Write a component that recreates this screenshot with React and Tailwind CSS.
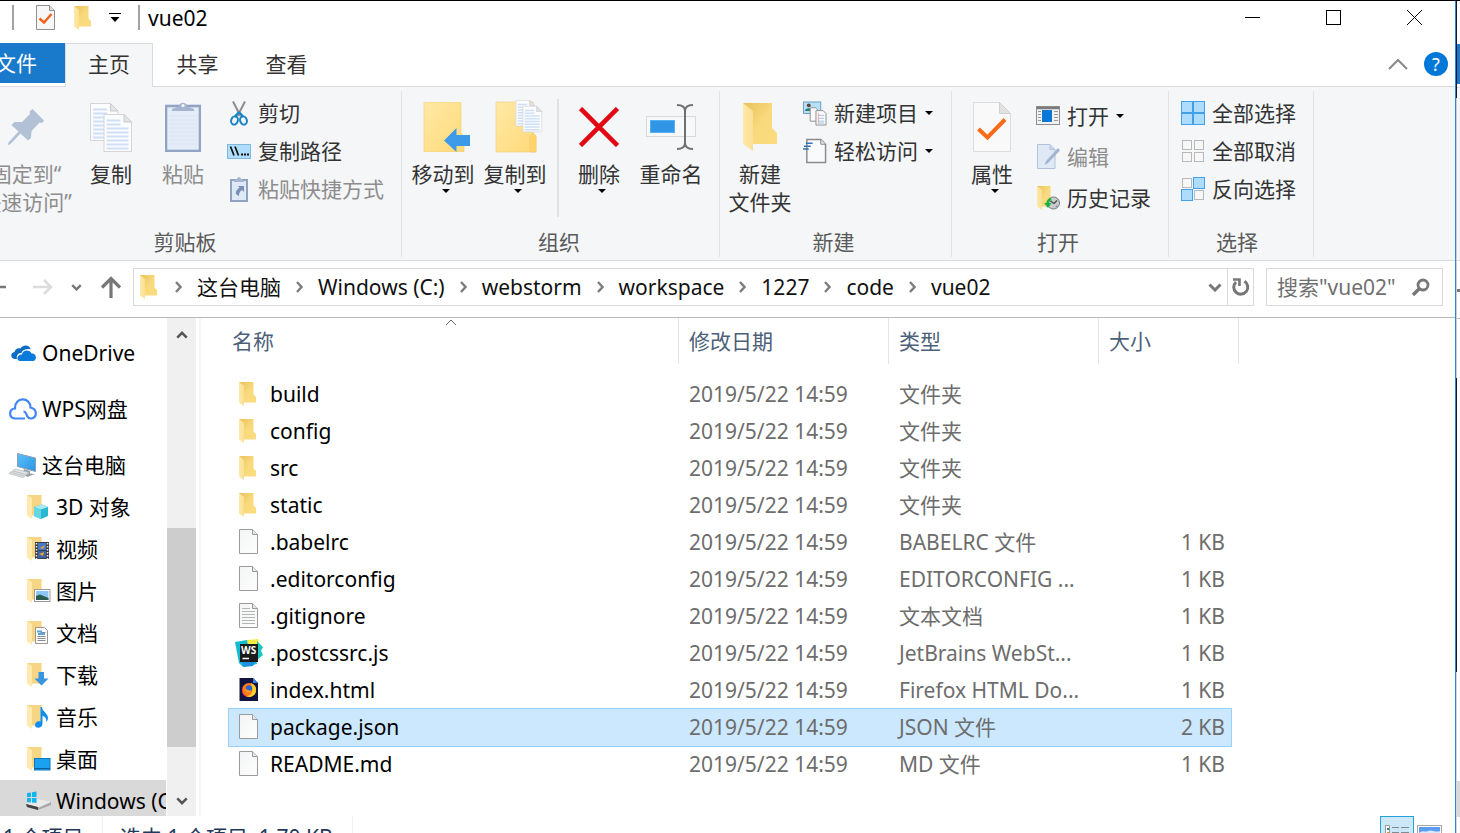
import { useState } from "react";

/* ---------- icons ---------- */

// gradients shared by all the icons
function IconDefs() {
  return (
    <svg width="0" height="0" className="absolute" aria-hidden="true">
      <defs>
        <linearGradient id="folderBack" x1="0" y1="0" x2="1" y2="1">
          <stop offset="0" stopColor="#e9c15a" />
          <stop offset="0.5" stopColor="#f8d97c" />
          <stop offset="1" stopColor="#fbdc80" />
        </linearGradient>
        <linearGradient id="folderFlap" x1="0" y1="0" x2="1" y2="0">
          <stop offset="0" stopColor="#ffe9a9" />
          <stop offset="1" stopColor="#fbdf92" />
        </linearGradient>
        <linearGradient id="folderFlat" x1="0" y1="0" x2="1" y2="1">
          <stop offset="0" stopColor="#ffe9a6" />
          <stop offset="1" stopColor="#ffd978" />
        </linearGradient>
        <linearGradient id="paper" x1="0" y1="0" x2="1" y2="1">
          <stop offset="0" stopColor="#f4f5f6" />
          <stop offset="1" stopColor="#fdfdfd" />
        </linearGradient>
        <linearGradient id="screen" x1="0" y1="0" x2="1" y2="1">
          <stop offset="0" stopColor="#5cc0fb" />
          <stop offset="1" stopColor="#2a93e4" />
        </linearGradient>
      </defs>
    </svg>
  );
}

function FolderShape() {
  return (
    <>
      <path d="M0 0H14.500V12.500L17 15V20.500H4Z" fill="url(#folderBack)" />
      <path d="M0 0L5 4V24L0 20.500Z" fill="url(#folderFlap)" />
    </>
  );
}

function FolderIcon({ className = "w-[17px] h-6" }) {
  return (
    <svg viewBox="0 0 17 24" preserveAspectRatio="xMinYMid meet" className={className}>
      <FolderShape />
    </svg>
  );
}

function FileIcon({ lines = false }) {
  return (
    <svg viewBox="0 0 20 25" className="w-5 h-[25px]">
      <path d="M0.500 0.500H13.500L18.500 5.500V24.500H0.500Z" fill="url(#paper)" stroke="#9b9b9b" />
      <path d="M13.500 0.500V5.500H18.500" fill="#e6e6e6" stroke="#9b9b9b" />
      {lines && (
        <path d="M3 5.500H11M3 8.500H16M3 11.500H16M3 14.500H16M3 17.500H16M3 20.500H16" stroke="#b4b4b4" />
      )}
    </svg>
  );
}

function WebStormIcon() {
  return (
    <svg viewBox="0 0 28 28" className="w-7 h-7">
      <path d="M0 3L12 1L18 6L22 25L8 28L4 24Z" fill="#12bccf" />
      <path d="M12 1L23 0L25 8L14 12Z" fill="#f5ec3f" />
      <path d="M22 2L28 8L26 12L28 16L22 21Z" fill="#1bc8c0" />
      <path d="M5 20L20 22L18 27L9 28Z" fill="#1f8fe0" />
      <rect x="5" y="5" width="18" height="18" fill="#1a1a1a" />
      <text x="6" y="15" fontSize="10" fontWeight="700" fill="#fff" fontFamily="Open Sans, sans-serif">
        WS
      </text>
      <path d="M7.500 19.500H14" stroke="#fff" strokeWidth="1.500" />
    </svg>
  );
}

function FirefoxFileIcon() {
  return (
    <svg viewBox="0 0 20 25" className="w-5 h-[25px]">
      <path d="M0.500 1H14L19 6V24H0.500Z" fill="#0f1440" />
      <path d="M14 1V6H19Z" fill="#3b7de0" />
      <circle cx="10" cy="13" r="7" fill="#ff7a1a" />
      <path d="M12 6C17 8 18 12 16.500 16C15 19.500 10 21 7 19C12 19 14 15 13 11Z" fill="#ffcb2e" />
      <path d="M3.500 9C3 15 5 18.500 9 19.500C5 20.500 1.500 15 3.500 9Z" fill="#f0304f" />
      <circle cx="10" cy="11.500" r="3.200" fill="#2c64c8" />
      <path d="M6 12C8 12 9 14 12.500 13.500C11 16.500 7 16.500 6 12Z" fill="#ff9a1f" />
    </svg>
  );
}

function PropertiesSmallIcon() {
  return (
    <svg viewBox="0 0 20 25" className="w-5 h-[25px]">
      <path d="M0.500 0.500H13.500L18.500 5.500V24.500H0.500Z" fill="#f7f7f7" stroke="#8f8f8f" />
      <path d="M13.500 0.500V5.500H18.500" fill="#dedede" stroke="#8f8f8f" />
      <path d="M3.500 13.500L8 17.500L15.500 9" fill="none" stroke="#f2601c" strokeWidth="2.400" />
    </svg>
  );
}

function PinIcon() {
  return (
    <svg viewBox="0 0 36 36" className="w-9 h-9">
      <path
        d="M24.500 0L36 11.500L34 14L31.500 13.500L23.500 22L23 29L20 31.500L12.500 24.500L2 35.500L0 36L0.500 33.500L10.500 22.500L3.500 16L6.500 13L14 13L22 5L21.500 2.500Z"
        fill="#b3c1d6"
      />
    </svg>
  );
}

function PageShape({ fill = "#fbfcfe" }) {
  return (
    <>
      <path d="M0.500 0.500H20.500L28 8V37.500H0.500Z" fill={fill} stroke="#d3d5d8" />
      <path d="M20.500 0.500V8H28Z" fill="#e4e4e4" stroke="#cbcbcb" />
      <path
        d="M3 6.500H17M3 10.500H17M3 14.500H25M3 18.500H25M3 22.500H25M3 26.500H25M3 30.500H25M3 34.500H25"
        stroke="#cfe0f6"
        strokeWidth="2"
      />
    </>
  );
}

function CopyIcon() {
  return (
    <svg viewBox="0 0 42 49" className="w-[42px] h-[49px]">
      <PageShape />
      <g transform="translate(13.500 11)">
        <PageShape />
      </g>
    </svg>
  );
}

function PasteIcon() {
  return (
    <svg viewBox="0 0 36 50" className="w-9 h-[50px]">
      <rect x="1" y="4" width="34" height="45" fill="#e4ecf8" stroke="#92a4c4" strokeWidth="2.600" />
      <path d="M4 14H32M4 18H32M4 22H32M4 26H32M4 30H32M4 34H32M4 38H32M4 42H32" stroke="#dae4f3" />
      <path d="M7 9V7L14 4.500C14 -0.500 22 -0.500 22 4.500L29 7V9Z" fill="#a5b4cf" />
      <circle cx="18" cy="3.600" r="1.600" fill="#f4f6f8" />
    </svg>
  );
}

function CutIcon() {
  return (
    <svg viewBox="0 0 18 25" className="w-[18px] h-[25px]">
      <path d="M3 0.500L10.500 15M15 0.500L7.500 15" stroke="#8d8d8d" strokeWidth="2" />
      <path d="M9 11L13.500 16M9 11L4.500 16" stroke="#1c84c9" strokeWidth="2.200" />
      <ellipse cx="4.500" cy="19.500" rx="3.300" ry="4.200" fill="none" stroke="#1c84c9" strokeWidth="2" transform="rotate(20 4.500 19.500)" />
      <ellipse cx="13.500" cy="19.500" rx="3.300" ry="4.200" fill="none" stroke="#1c84c9" strokeWidth="2" transform="rotate(-20 13.500 19.500)" />
    </svg>
  );
}

function CopyPathIcon() {
  return (
    <svg viewBox="0 0 24 15" className="w-6 h-[15px]">
      <rect x="0.500" y="0.500" width="23" height="14" fill="#b0ddfc" stroke="#7fb9df" />
      <path d="M3.500 2.500L7 11.500M8 2.500L11.500 11.500" stroke="#111" strokeWidth="1.700" />
      <path d="M14 10.500H16M17 10.500H19M20 10.500H22" stroke="#111" strokeWidth="1.800" />
    </svg>
  );
}

function PasteShortcutIcon() {
  return (
    <svg viewBox="0 0 18 25" className="w-[18px] h-[25px]">
      <rect x="1" y="3" width="16" height="21" fill="#dfe8f5" stroke="#8fa2c2" strokeWidth="2" />
      <path d="M4 5V3L7 2C7 -0.500 11 -0.500 11 2L14 3V5Z" fill="#a5b4cf" />
      <path d="M8 9H14V15L12 13C9.500 14.500 9 16.500 9 19C4.500 17.500 5 13.500 9.500 10.800Z" fill="#7a90b8" />
    </svg>
  );
}

function MoveToIcon() {
  return (
    <svg viewBox="-9 0 56 50" className="w-14 h-[50px]">
      <path d="M0 0H37V31L40 34V50H0Z" fill="url(#folderFlat)" stroke="#f3cf77" strokeWidth="0.600" />
      <path d="M20 38.500L32.500 26V33H46V44H32.500V50Z" fill="#3c9ae8" />
    </svg>
  );
}

function CopyToIcon() {
  return (
    <svg viewBox="-9 0 56 54" className="w-14 h-[54px]">
      <path d="M0 2H37V33L40 36V52H0Z" fill="url(#folderFlat)" stroke="#f3cf77" strokeWidth="0.600" />
      <path d="M34 52V36L37 33L40 36V52Z" fill="#ffd56c" stroke="#efc766" strokeWidth="0.600" />
      <g transform="translate(19.500 0) scale(0.690)">
        <PageShape />
      </g>
      <g transform="translate(26.500 6) scale(0.690)">
        <PageShape />
      </g>
    </svg>
  );
}

function DeleteIcon() {
  return (
    <svg viewBox="0 0 40 40" className="w-10 h-10">
      <path d="M1.500 1.500L38.500 38.500M38.500 1.500L1.500 38.500" stroke="#e30613" strokeWidth="4.600" />
    </svg>
  );
}

function RenameIcon() {
  return (
    <svg viewBox="0 0 50 46" className="w-[50px] h-[46px]">
      <rect x="0.500" y="12.500" width="49" height="20" fill="#f7f8fa" stroke="#d8d9db" />
      <rect x="4.500" y="16.500" width="24" height="12" fill="#3195e6" stroke="#55b0f2" />
      <path d="M31 1C36 1 39 3 39 7V39C39 43 36 45 31 45M47 1C42 1 39 3 39 7M39 39C39 43 42 45 47 45" fill="none" stroke="#6f6f6f" strokeWidth="2" />
    </svg>
  );
}

function NewItemIcon() {
  return (
    <svg viewBox="0 0 25 25" className="w-[25px] h-[25px]">
      <rect x="0.500" y="0.500" width="18" height="12" fill="#b7e0f8" stroke="#6c9dbb" />
      <circle cx="6" cy="4" r="2" fill="#5d4636" />
      <path d="M2 10C2 6 10 6 10 10Z" fill="#2d7d72" />
      <path d="M7.500 6.500H13L15.500 9V20.500H7.500Z" fill="#fafafa" stroke="#8f8f8f" />
      <path d="M13.500 9.500H21L24 12.500V24.500H13.500Z" fill="#fafafa" stroke="#8f8f8f" />
      <path d="M16 14.500H22M16 17.500H22M16 20.500H22M16 22.500H22" stroke="#9dc3e6" />
      <path d="M16 12V23" stroke="#f0a3a3" />
    </svg>
  );
}

function EasyAccessIcon() {
  return (
    <svg viewBox="0 0 25 26" className="w-[25px] h-[26px]">
      <path d="M4 1H18.500L23.500 6V25H4Z" fill="#fafafa" stroke="#8a8a8a" strokeWidth="1.500" />
      <path d="M18.500 1V6H23.500" fill="#e2e2e2" stroke="#8a8a8a" />
      <path d="M3 5H10M1 8H8M0 11H6" stroke="#2f74b5" strokeWidth="1.600" />
    </svg>
  );
}

function PropertiesIcon() {
  return (
    <svg viewBox="0 0 38 50" className="w-[38px] h-[50px]">
      <path d="M0.500 0.500H26.500L37.500 11.500V49.500H0.500Z" fill="#f9f9f9" stroke="#dcdcdc" />
      <path d="M26.500 0.500V11.500H37.500Z" fill="#e2e2e2" stroke="#d2d2d2" />
      <path d="M5.500 27L14.500 35.500L32 17.500" fill="none" stroke="#fb6a17" strokeWidth="4" />
    </svg>
  );
}

function OpenIcon() {
  return (
    <svg viewBox="0 0 24 19" className="w-6 h-[19px]">
      <rect x="0.500" y="0.500" width="23" height="18" fill="#f1f1f1" stroke="#8e8e8e" />
      <path d="M1 2H23" stroke="#7c7c7c" strokeWidth="2.500" />
      <rect x="6" y="4" width="10" height="12" fill="#0c78d6" />
      <path d="M2 5.500H5M2 8.500H5M2 11.500H5M2 14.500H5M18 5.500H22M18 8.500H22M18 11.500H22M18 14.500H22" stroke="#9a9a9a" />
    </svg>
  );
}

function EditIcon() {
  return (
    <svg viewBox="0 0 24 25" className="w-6 h-[25px]">
      <path d="M1.500 0.500H14L19 5.500V24.500H1.500Z" fill="#dfe8f5" stroke="#b3c2da" />
      <path d="M14 0.500V5.500H19" fill="#c8d5e8" stroke="#b3c2da" />
      <path d="M22 4L24 6.500L12 19L8.500 21L10 17Z" fill="#a3b5d2" />
    </svg>
  );
}

function HistoryIcon() {
  return (
    <svg viewBox="0 0 24 24" className="w-6 h-6">
      <path d="M1 0H14.500V20.500H5Z" fill="url(#folderBack)" />
      <path d="M1 0L6 4V24L1 20.500Z" fill="url(#folderFlap)" />
      <circle cx="17.500" cy="17" r="6" fill="#c9cdcf" stroke="#73797c" />
      <path d="M14.500 15L18 17.500L21 14.500M20.500 20.500L20 20" stroke="#3f4345" strokeWidth="1.200" fill="none" />
      <path d="M15 12C11 12.500 10.500 15.500 10.500 17H8L12 22L15.500 17H13C13 16 13.500 14.500 15.500 14.500Z" fill="#19b33c" />
    </svg>
  );
}

function GridIcon({ filled }) {
  const cells = [[0, 0], [1, 0], [0, 1], [1, 1]];
  return (
    <svg viewBox="0 0 24 24" className="w-6 h-6">
      {cells.map(([cx, cy], i) =>
        filled.includes(i) ? (
          <rect key={i} x={cx * 12 + 0.5} y={cy * 12 + 0.5} width="11" height="11" fill="#aedcfd" stroke="#42a0e8" />
        ) : (
          <rect key={i} x={cx * 12 + 1.5} y={cy * 12 + 1.5} width="9" height="9" fill="#f7f7f7" stroke="#b9b9b9" />
        )
      )}
    </svg>
  );
}

function Chevron() {
  return (
    <svg viewBox="0 0 7 12" className="w-[7px] h-3 shrink-0">
      <path d="M1 1L5.500 6L1 11" fill="none" stroke="#7d7d7d" strokeWidth="2.400" />
    </svg>
  );
}

function ChevronDown({ className, color = "#777" }) {
  return (
    <svg viewBox="0 0 14 9" className={className}>
      <path d="M1.500 1.500L7 7L12.500 1.500" fill="none" stroke={color} strokeWidth="3" />
    </svg>
  );
}

function Caret({ className = "" }) {
  return (
    <svg viewBox="0 0 8 4" className={`w-2 h-1 shrink-0 ${className}`}>
      <path d="M0 0H8L4 4Z" fill="#000" />
    </svg>
  );
}

function OneDriveIcon() {
  return (
    <svg viewBox="0 0 25 16" className="w-[25px] h-4">
      <path d="M6 14H3.500C-1 13 -0.500 7.500 3.500 7C4 3.500 7.500 2.500 9.500 3.500C12 -1 19 -0.500 19.500 4.500C14 3 11 6 10.500 8C7 7.500 5 11 6 14Z" fill="#0a6cc4" />
      <path d="M9 16C5 15.500 5.500 9.500 11 9.500C11.500 5 18.500 4 20.500 8.500C25.500 8 26.500 15 22.500 16Z" fill="#0a7bdc" />
    </svg>
  );
}

function WpsCloudIcon() {
  return (
    <svg viewBox="0 0 28 22" className="w-7 h-[22px]">
      <path
        d="M16 20.500H6C-0.500 20 -0.500 11 6 10.500C5.500 -1.500 21.500 -1.500 21.500 9.500C28.500 11 28.500 19.500 22 20.500C16 20.500 19 13.500 14.500 13.500"
        fill="none"
        stroke="#4285f4"
        strokeWidth="2.200"
      />
    </svg>
  );
}

function ComputerIcon() {
  return (
    <svg viewBox="0 0 28 25" className="w-7 h-[25px]">
      <path d="M8.500 0.500L26.500 5V18.500L8.500 13.500Z" fill="url(#screen)" stroke="#8ba0ae" />
      <path d="M15 16L21 18V20.500L26 21L18 24L14 19Z" fill="#9aa1a5" />
      <path d="M6 16L20 19.500L14 24.500L0 20.500Z" fill="#e3e6e8" stroke="#b6bcc0" strokeWidth="0.800" />
      <path d="M4 18L17 21.500M2.500 19.500L15.500 23" stroke="#a9afb3" strokeWidth="0.700" />
    </svg>
  );
}

function DriveIcon() {
  return (
    <svg viewBox="0 0 26 20" className="w-[26px] h-5">
      <path d="M0 13L12 8L25 11L13 18Z" fill="#e9e9e9" />
      <path d="M0 13L13 16.500L25 11V14L12 19L1 16Z" fill="#a8a8a8" />
      <path d="M0 13L12 16V19L1 16Z" fill="#444" />
      <path d="M1 2L5 1.400V6H1ZM6 1.200L10.500 0.500V6H6ZM1 7H5V11.500L1 11ZM6 7H10.500V12L6 11.500Z" fill="#12b5ee" />
    </svg>
  );
}

// folder with a small picture in its lower right corner
function BadgeFolder({ children }) {
  return (
    <svg viewBox="0 0 24 24" className="w-6 h-6">
      <path d="M0 0H14.500V20.500H4Z" fill="#f6d684" />
      <path d="M0 0L5 3V24L0 20.500Z" fill="#ffe9ad" />
      {children}
    </svg>
  );
}

const badges = {
  objects: (
    <>
      <path d="M7 12L15 9.500L21 12V21L14 24L7 21Z" fill="#28b8cf" />
      <path d="M7 12L15 9.500L21 12L14 14.500Z" fill="#a9eaf2" />
      <path d="M7 12L14 14.500V24L7 21Z" fill="#62d6e5" />
    </>
  ),
  video: (
    <>
      <rect x="8" y="5" width="14" height="17" fill="#3a3f47" />
      <rect x="11" y="6" width="8" height="7" fill="#4677c8" />
      <rect x="11" y="14" width="8" height="7" fill="#3f63a8" />
      <path d="M9.500 6V22M20.500 6V22" stroke="#e6e6e6" strokeWidth="1.500" strokeDasharray="1.500 1.500" />
      <path d="M13 11L18 8L16 12ZM12 17L17 15L16 19Z" fill="#f0a62c" />
    </>
  ),
  pictures: (
    <>
      <rect x="7.500" y="10.500" width="15.500" height="12" fill="#fff" stroke="#9a9a9a" />
      <rect x="9" y="12" width="12.500" height="9" fill="#8cc6f2" />
      <path d="M9 17L13 15.500L21.500 19V21H9Z" fill="#2d5c4e" />
    </>
  ),
  documents: (
    <>
      <path d="M8.500 6.500H17.500L20.500 9.500V22.500H8.500Z" fill="#fbfbfb" stroke="#969696" />
      <path d="M10.500 15.500H18.500M10.500 17.500H18.500M10.500 19.500H18.500M13.500 11.500H18.500" stroke="#8d8d8d" />
      <path d="M10 10.500H15M11 13H18" stroke="#5aa6d8" strokeWidth="2" />
    </>
  ),
  downloads: <path d="M11.500 9H17V15.500H21.500L14.500 22.500L7.500 15.500H11.500Z" fill="#3a94e0" />,
  music: (
    <path d="M13.500 2H15C15.500 7 21 8 21 13C21 15 20 16 19 17C20 13 17.500 11.500 15.500 11V18.500C15.500 24 7.500 24 8 19.500C8.500 16.500 11.500 15.500 13.500 16.500Z" fill="#1090ee" />
  ),
  desktop: (
    <>
      <rect x="7.500" y="11.500" width="15.500" height="11.500" fill="#1ba1f2" stroke="#0f76bb" />
      <path d="M8 21.500H23" stroke="#0d5f9a" />
    </>
  ),
};

/* ---------- data ---------- */

const crumbs = ["这台电脑", "Windows (C:)", "webstorm", "workspace", "1227", "code", "vue02"];

const treeItems = [
  { label: "OneDrive", icon: <OneDriveIcon />, root: true, spaced: true },
  { label: "WPS网盘", icon: <WpsCloudIcon />, root: true, spaced: true },
  { label: "这台电脑", icon: <ComputerIcon />, root: true },
  { label: "3D 对象", icon: <BadgeFolder>{badges.objects}</BadgeFolder> },
  { label: "视频", icon: <BadgeFolder>{badges.video}</BadgeFolder> },
  { label: "图片", icon: <BadgeFolder>{badges.pictures}</BadgeFolder> },
  { label: "文档", icon: <BadgeFolder>{badges.documents}</BadgeFolder> },
  { label: "下载", icon: <BadgeFolder>{badges.downloads}</BadgeFolder> },
  { label: "音乐", icon: <BadgeFolder>{badges.music}</BadgeFolder> },
  { label: "桌面", icon: <BadgeFolder>{badges.desktop}</BadgeFolder> },
  { label: "Windows (C:)", icon: <DriveIcon />, active: true },
];

const DATE = "2019/5/22 14:59";

const folder = <FolderIcon className="w-5 h-6" />;

const files = [
  { name: "build", icon: folder, type: "文件夹" },
  { name: "config", icon: folder, type: "文件夹" },
  { name: "src", icon: folder, type: "文件夹" },
  { name: "static", icon: folder, type: "文件夹" },
  { name: ".babelrc", icon: <FileIcon />, type: "BABELRC 文件", size: "1 KB" },
  { name: ".editorconfig", icon: <FileIcon />, type: "EDITORCONFIG ...", size: "1 KB" },
  { name: ".gitignore", icon: <FileIcon lines />, type: "文本文档", size: "1 KB" },
  { name: ".postcssrc.js", icon: <WebStormIcon />, type: "JetBrains WebSt...", size: "1 KB" },
  { name: "index.html", icon: <FirefoxFileIcon />, type: "Firefox HTML Do...", size: "1 KB" },
  { name: "package.json", icon: <FileIcon />, type: "JSON 文件", size: "2 KB" },
  { name: "README.md", icon: <FileIcon />, type: "MD 文件", size: "1 KB" },
];

/* ---------- ribbon ---------- */

function RibbonGroup({ title, className, children }) {
  return (
    <section className={`flex flex-col shrink-0 border-r border-[#e1e3e5] ${className}`}>
      <div className="flex flex-1 items-start">{children}</div>
      <h2 className="h-[29px] leading-7 pr-2 text-center text-[#5a5a5a]">{title}</h2>
    </section>
  );
}

function BigButton({ icon, lines, caret, disabled, className = "w-[72px]" }) {
  return (
    <button
      disabled={disabled}
      className={`flex flex-col items-center shrink-0 pt-2 whitespace-nowrap ${
        disabled ? "text-[#8d8d8d]" : "text-[#333]"
      } ${className}`}
    >
      <span className="flex h-14 items-center justify-center">{icon}</span>
      <span className="mt-[5px] leading-7">
        {lines.map((line) => (
          <span key={line} className="block">
            {line}
          </span>
        ))}
      </span>
      {caret && <Caret className="mt-px ml-1.5" />}
    </button>
  );
}

function SmallButton({ icon, label, caret, disabled, className = "h-[38px]" }) {
  return (
    <button
      disabled={disabled}
      className={`flex items-center gap-[7px] whitespace-nowrap ${
        disabled ? "text-[#8d8d8d]" : "text-[#333]"
      } ${className}`}
    >
      <span className="flex w-6 shrink-0 justify-center">{icon}</span>
      {label}
      {caret && <Caret />}
    </button>
  );
}

function Ribbon() {
  return (
    <div className="flex h-[174px] shrink-0 overflow-hidden border-b border-[#d9dbdd] bg-[#f4f6f8] pt-1 pb-[3px]">
      <RibbonGroup title="剪贴板" className="-ml-[35px] w-[437px] pl-3">
        <BigButton icon={<PinIcon />} lines={["固定到“", "快速访问”"]} disabled className="w-[98px]" />
        <BigButton icon={<CopyIcon />} lines={["复制"]} />
        <BigButton icon={<PasteIcon />} lines={["粘贴"]} disabled />
        <div className="pl-2 pt-[3px]">
          <SmallButton icon={<CutIcon />} label="剪切" />
          <SmallButton icon={<CopyPathIcon />} label="复制路径" />
          <SmallButton icon={<PasteShortcutIcon />} label="粘贴快捷方式" disabled />
        </div>
      </RibbonGroup>

      <RibbonGroup title="组织" className="w-[318px] pl-[5px]">
        <BigButton icon={<MoveToIcon />} lines={["移动到"]} caret />
        <BigButton icon={<CopyToIcon />} lines={["复制到"]} caret />
        <div className="ml-1.5 mr-1 mt-2 h-[118px] w-0.5 bg-[#dfe1e3]"></div>
        <BigButton icon={<DeleteIcon />} lines={["删除"]} caret />
        <BigButton icon={<RenameIcon />} lines={["重命名"]} />
      </RibbonGroup>

      <RibbonGroup title="新建" className="w-[232px] pl-1">
        <BigButton icon={<FolderIcon className="w-[34px] h-12" />} lines={["新建", "文件夹"]} />
        <div className="pl-[7px] pt-[3px]">
          <SmallButton icon={<NewItemIcon />} label="新建项目" caret />
          <SmallButton icon={<EasyAccessIcon />} label="轻松访问" caret />
        </div>
      </RibbonGroup>

      <RibbonGroup title="打开" className="w-[217px] pl-1">
        <BigButton icon={<PropertiesIcon />} lines={["属性"]} caret />
        <div className="pl-2 pt-1">
          <SmallButton icon={<OpenIcon />} label="打开" caret className="h-[41px]" />
          <SmallButton icon={<EditIcon />} label="编辑" disabled className="h-[41px]" />
          <SmallButton icon={<HistoryIcon />} label="历史记录" className="h-[41px]" />
        </div>
      </RibbonGroup>

      <RibbonGroup title="选择" className="w-[145px]">
        <div className="pl-3 pt-[3px]">
          <SmallButton icon={<GridIcon filled={[0, 1, 2, 3]} />} label="全部选择" />
          <SmallButton icon={<GridIcon filled={[]} />} label="全部取消" />
          <SmallButton icon={<GridIcon filled={[1, 2]} />} label="反向选择" />
        </div>
      </RibbonGroup>
    </div>
  );
}

/* ---------- window parts ---------- */

function TitleBar() {
  return (
    <header className="flex h-[33px] shrink-0 items-center">
      <div className="ml-3 h-[25px] w-0.5 bg-[#a3a3a3]"></div>
      <button className="ml-[22px]" aria-label="属性">
        <PropertiesSmallIcon />
      </button>
      <button className="ml-[18px]" aria-label="新建文件夹">
        <FolderIcon />
      </button>
      <button className="ml-[18px]" aria-label="自定义快速访问工具栏">
        <svg viewBox="0 0 12 9" className="w-3 h-[9px]">
          <path d="M0 0.500H12" stroke="#000" />
          <path d="M1.500 4H10.500L6 9Z" fill="#000" />
        </svg>
      </button>
      <div className="ml-[17px] h-[25px] w-0.5 bg-[#a3a3a3]"></div>
      <h1 className="ml-2 text-black">vue02</h1>
      <div className="ml-auto flex self-stretch">
        <button className="flex w-[81px] items-center justify-center" aria-label="最小化">
          <svg viewBox="0 0 15 15" className="w-[15px] h-[15px]">
            <path d="M0 7.500H15" stroke="#000" />
          </svg>
        </button>
        <button className="flex w-[81px] items-center justify-center" aria-label="最大化">
          <svg viewBox="0 0 15 15" className="w-[15px] h-[15px]">
            <rect x="0.500" y="0.500" width="14" height="14" fill="none" stroke="#000" />
          </svg>
        </button>
        <button className="flex w-[81px] items-center justify-center" aria-label="关闭">
          <svg viewBox="0 0 15 15" className="w-[15px] h-[15px]">
            <path d="M0 0L15 15M15 0L0 15" stroke="#000" />
          </svg>
        </button>
      </div>
    </header>
  );
}

function TabBar() {
  return (
    <nav className="flex h-[53px] shrink-0 items-end border-b border-[#d9dbdd] text-[#333]">
      <button className="-ml-[33px] mb-[3px] h-10 w-[98px] bg-[#1979ca] pb-px text-white">文件</button>
      <button className="-mb-px h-11 w-[88px] border-x border-t border-[#d9dbdd] bg-[#f4f6f8] pb-[3px]">
        主页
      </button>
      <button className="h-[43px] w-[89px] pb-0.5">共享</button>
      <button className="h-[43px] w-[89px] pb-0.5">查看</button>
      <div className="ml-auto flex h-[43px] items-center gap-4 pr-[7px] pb-0.5">
        <button aria-label="最小化功能区">
          <svg viewBox="0 0 20 12" className="w-5 h-3">
            <path d="M1 11L10 2L19 11" fill="none" stroke="#8a8a8a" strokeWidth="2" />
          </svg>
        </button>
        <button className="flex h-6 w-6 items-center justify-center rounded-full bg-[#0078d7] text-lg leading-6 text-white">
          ?
        </button>
      </div>
    </nav>
  );
}

function AddressBar() {
  const [query, setQuery] = useState("");

  return (
    <div className="flex h-[57px] shrink-0 items-start overflow-hidden border-b border-[#b9b9b9] pt-[7px] pr-3">
      <div className="flex h-[38px] items-center shrink-0 pr-[11px]">
        <button className="-ml-[14px]" aria-label="后退">
          <svg viewBox="0 0 20 16" className="w-5 h-4">
            <path d="M20 8H2M9 1L2 8L9 15" fill="none" stroke="#777" strokeWidth="2.600" />
          </svg>
        </button>
        <button className="ml-[27px]" disabled aria-label="前进">
          <svg viewBox="0 0 20 16" className="w-5 h-4">
            <path d="M0 8H18M11 1L18 8L11 15" fill="none" stroke="#dcdcdc" strokeWidth="2.600" />
          </svg>
        </button>
        <button className="ml-[18px]" aria-label="最近浏览的位置">
          <ChevronDown className="w-[11px] h-[7px]" />
        </button>
        <button className="ml-[18px]" aria-label="上移">
          <svg viewBox="0 0 22 22" className="w-[22px] h-[22px]">
            <path d="M11 22V3M2 11.500L11 2.500L20 11.500" fill="none" stroke="#777" strokeWidth="3.200" />
          </svg>
        </button>
      </div>
      <div className="flex h-[38px] min-w-0 flex-1 items-center border border-[#d9d9d9]">
        <span className="ml-1.5 mr-[18px] shrink-0">
          <FolderIcon />
        </span>
        <ol className="flex min-w-0 flex-1 items-center overflow-hidden whitespace-nowrap pb-px text-[#111]">
          {crumbs.map((crumb) => (
            <li key={crumb} className="flex items-center">
              <Chevron />
              <a href="#" className="px-[15px]">
                {crumb}
              </a>
            </li>
          ))}
        </ol>
        <button className="flex h-full w-6 items-center justify-center" aria-label="以前的位置">
          <ChevronDown className="w-[14px] h-[9px]" />
        </button>
        <button
          className="flex h-full w-[26px] items-center justify-center border-l border-[#d9d9d9]"
          aria-label="刷新"
        >
          <svg viewBox="0 0 18 18" className="w-[18px] h-[18px]">
            <path d="M12.500 3.200A7 7 0 1 1 4 4" fill="none" stroke="#777" strokeWidth="3" />
            <path d="M1 1.500H7.500V8" fill="none" stroke="#777" strokeWidth="2.600" />
          </svg>
        </button>
      </div>
      <label className="ml-3 flex h-[38px] w-[177px] shrink-0 items-center border border-[#d9d9d9] pl-[10px] pr-3">
        <input
          type="text"
          value={query}
          onChange={(e) => setQuery(e.target.value)}
          placeholder={'搜索"vue02"'}
          aria-label="搜索"
          className="h-8 min-w-0 flex-1 bg-transparent outline-none placeholder:text-[#707070]"
        />
        <svg viewBox="0 0 18 18" className="w-[18px] h-[18px] shrink-0">
          <circle cx="11" cy="7" r="5" fill="none" stroke="#777" strokeWidth="2.800" />
          <path d="M7.500 10.500L1 17" stroke="#777" strokeWidth="3.400" />
        </svg>
      </label>
    </div>
  );
}

function Sidebar() {
  return (
    <aside className="flex w-[201px] shrink-0 border-r-2 border-[#f7f7f7]">
      <ul className="w-[166px] shrink-0 overflow-hidden pt-[14px]">
        {treeItems.map((item) => (
          <li key={item.label} className={item.spaced ? "mb-[14px]" : ""}>
            <a
              href="#"
              className={`flex h-[42px] items-center whitespace-nowrap text-black ${
                item.root ? "pl-[9px]" : "pl-[25px]"
              } ${item.active ? "bg-[#d9d9d9]" : ""}`}
            >
              <span className={`flex shrink-0 justify-center ${item.root ? "mr-[5px] w-7" : "mr-[3px] w-7"}`}>
                {item.icon}
              </span>
              {item.label}
            </a>
          </li>
        ))}
      </ul>
      <div className="ml-px flex w-[29px] flex-col items-center bg-[#f0f0f0]">
        <button className="flex h-[34px] w-full items-center justify-center" aria-label="向上滚动">
          <ChevronDown className="w-3 h-2 rotate-180" color="#555" />
        </button>
        <div className="flex-[176]"></div>
        <div className="w-full flex-[219] bg-[#cdcdcd]"></div>
        <div className="flex-[39]"></div>
        <button className="flex h-[30px] w-full items-center justify-center" aria-label="向下滚动">
          <ChevronDown className="w-3 h-2" color="#555" />
        </button>
      </div>
    </aside>
  );
}

function FileTable() {
  const [selected, setSelected] = useState("package.json");
  const headCell = "flex h-[46px] w-full items-center border-r border-[#e5e5e5] pb-px text-[#4c607a]";

  return (
    <div className="min-w-0 flex-1 overflow-hidden pl-7">
      <table className="w-[1002px] table-fixed border-collapse text-left">
        <thead>
          <tr className="h-[58px] align-top">
            <th className="relative w-[450px] p-0 font-normal">
              <button className={`${headCell} pl-[3px]`}>名称</button>
              <svg viewBox="0 0 12 7" className="absolute top-px left-[216px] w-3 h-[7px]">
                <path d="M1 6L6 1L11 6" fill="none" stroke="#666" />
              </svg>
            </th>
            <th className="w-[210px] p-0 font-normal">
              <button className={`${headCell} pl-2.5`}>修改日期</button>
            </th>
            <th className="w-[210px] p-0 font-normal">
              <button className={`${headCell} pl-2.5`}>类型</button>
            </th>
            <th className="p-0 font-normal">
              <div className="-mr-2">
                <button className={`${headCell} pl-2.5`}>大小</button>
              </div>
            </th>
          </tr>
        </thead>
        <tbody>
          {files.map((file) => (
            <tr
              key={file.name}
              onClick={() => setSelected(file.name)}
              className={`h-[37px] whitespace-nowrap text-[#6d6d6d] ${
                selected === file.name ? "bg-[#cce8ff] outline-1 outline-[#99d1ff]" : ""
              }`}
            >
              <td className="p-0 pb-0.5 pl-1.5 text-black">
                <div className="flex items-center gap-[7px]">
                  <span className="flex w-7 shrink-0 justify-center">{file.icon}</span>
                  {file.name}
                </div>
              </td>
              <td className="p-0 pb-0.5 pl-2.5">{DATE}</td>
              <td className="p-0 pb-0.5 pl-2.5">{file.type}</td>
              <td className="p-0 pb-0.5 pr-1.5 text-right">{file.size}</td>
            </tr>
          ))}
        </tbody>
      </table>
    </div>
  );
}

function StatusBar() {
  return (
    <footer className="h-[17px] shrink-0 overflow-hidden text-[#1e395b]">
      <div className="flex h-[42px] items-center whitespace-nowrap">
        <span className="w-[102px] pl-[3px]">1 个项目</span>
        <span className="h-full w-px bg-[#f0f0f0]"></span>
        <span className="w-[249px] pl-[17px]">选中 1 个项目&nbsp; 1.70 KB</span>
        <span className="h-full w-px bg-[#f0f0f0]"></span>
        <div className="ml-auto flex h-full items-start pr-[13px]">
          <button
            className="flex h-full w-[34px] justify-center border border-[#26a0da] bg-[#cce8f6] pt-2"
            aria-label="详细信息"
          >
            <svg viewBox="0 0 24 20" className="w-6 h-5">
              <path d="M0.500 0.500H4.500V19.500H0.500Z" fill="#fff" stroke="#999" />
              <rect x="2" y="3" width="2" height="2" fill="#2a7d8f" />
              <rect x="2" y="7" width="2" height="2" fill="#c99a2e" />
              <path d="M7 2.500H14M16 2.500H24M7 7.500H14M16 7.500H24M7 12.500H14M16 12.500H24" stroke="#808b91" />
            </svg>
          </button>
          <button className="pl-[3px] pt-[9px]" aria-label="大缩略图">
            <svg viewBox="0 0 25 20" className="w-[25px] h-5">
              <rect x="0.500" y="0.500" width="24" height="19" fill="#fff" stroke="#a5a5a5" />
              <rect x="2" y="2" width="21" height="16" fill="#5c9df2" />
              <path d="M2 8C6 4 8 8 11 6C15 4 18 8 23 6V18H2Z" fill="#d7e9fb" />
            </svg>
          </button>
        </div>
      </div>
    </footer>
  );
}

// strip of the window that lies behind, seen past the right border
function WindowBehind() {
  return (
    <div className="flex w-1 shrink-0" aria-hidden="true">
      <div className="flex w-px flex-col">
        <div className="h-[97px] bg-[#0b1a33]"></div>
        <div className="h-[280px] bg-[#c9ced4]"></div>
        <div className="h-[294px] bg-[#0b1a33]"></div>
        <div className="flex-1 bg-[#d5d9dd]"></div>
      </div>
      <div className="flex w-[3px] flex-col bg-white">
        <div className="mt-[43px] h-10 bg-[#1979ca]"></div>
        <div className="mt-[3px] h-[174px] border-y border-[#d9dbdd] bg-[#f4f6f8]"></div>
        <div className="mt-[28px] h-[3px] bg-[#777]"></div>
        <div className="mt-[26px] h-px bg-[#b9b9b9]"></div>
        <div className="mt-[462px] h-9 bg-[#d9d9d9]"></div>
      </div>
    </div>
  );
}

export default function App() {
  return (
    <div className="flex h-screen overflow-hidden border-t border-black bg-white font-['Noto_Sans','Noto_Sans_CJK_SC',sans-serif] text-[21px] leading-7">
      <IconDefs />
      <div className="flex min-w-0 flex-1 flex-col border-r border-[#2f86cf]">
        <TitleBar />
        <TabBar />
        <Ribbon />
        <AddressBar />
        <div className="flex min-h-0 flex-1 overflow-hidden">
          <Sidebar />
          <FileTable />
        </div>
        <StatusBar />
      </div>
      <WindowBehind />
    </div>
  );
}
